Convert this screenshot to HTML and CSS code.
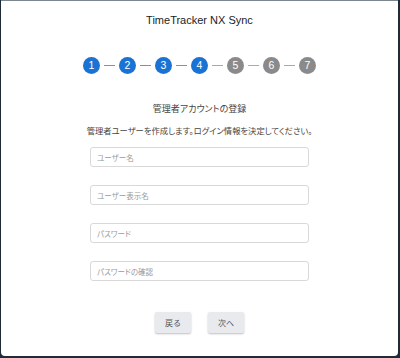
FILE: index.html
```html
<!DOCTYPE html>
<html lang="ja">
<head>
<meta charset="utf-8">
<title>TimeTracker NX Sync</title>
<link rel="stylesheet" href="styles.css">
</head>
<body>
<div class="card">
  <h1 class="title">TimeTracker NX Sync</h1>
  <div class="stepper">
    <span class="step done">1</span><span class="line done"></span>
    <span class="step done">2</span><span class="line done"></span>
    <span class="step done">3</span><span class="line done"></span>
    <span class="step done">4</span><span class="line"></span>
    <span class="step">5</span><span class="line"></span>
    <span class="step">6</span><span class="line"></span>
    <span class="step">7</span>
  </div>
  <h2 class="heading">管理者アカウントの登録</h2>
  <p class="desc">管理者ユーザーを作成します。ログイン情報を決定してください。</p>
  <div class="form">
    <input class="field" type="text" placeholder="ユーザー名">
    <input class="field" type="text" placeholder="ユーザー表示名">
    <input class="field" type="password" placeholder="パスワード">
    <input class="field" type="password" placeholder="パスワードの確認">
  </div>
  <div class="actions">
    <button class="btn">戻る</button>
    <button class="btn">次へ</button>
  </div>
</div>
</body>
</html>
```
FILE: styles.css
```css
html, body {
  margin: 0;
  padding: 0;
}
body {
  background: #1f2b37;
  width: 400px;
  height: 358px;
  overflow: hidden;
  font-family: "Liberation Sans", Roboto, "Noto Sans CJK JP", sans-serif;
}
.card {
  box-sizing: border-box;
  margin: 0 2px 0 1px;
  height: 356px;
  background: #fff;
  border-top: 1px solid #7c868f;
  border-radius: 0 0 4px 4px;
  display: flex;
  flex-direction: column;
  align-items: center;
}
.title {
  margin: 12px 0 0;
  font-size: 11px;
  line-height: 14px;
  font-weight: normal;
  color: #222;
}
.stepper {
  margin-top: 30px;
  display: flex;
  align-items: center;
  gap: 4px;
}
.step {
  width: 17px;
  height: 17px;
  border-radius: 50%;
  background: #8a8a8a;
  color: #fff;
  font-size: 10.5px;
  line-height: 17px;
  text-align: center;
}
.step.done {
  background: #1a73d4;
}
.line {
  width: 11px;
  height: 1.5px;
  background: #aaaaaa;
}
.line.done {
  background: #5a9be0;
}
.heading {
  margin: 29px 0 0;
  font-family: "Noto Sans CJK JP", sans-serif;
  font-feature-settings: "palt";
  font-size: 9px;
  line-height: 12px;
  font-weight: normal;
  color: #444;
}
.desc {
  margin: 9px 0 0;
  font-family: "Noto Sans CJK JP", sans-serif;
  font-feature-settings: "palt";
  font-size: 8.3px;
  line-height: 12px;
  color: #444;
}
.form {
  margin-top: 11px;
  display: flex;
  flex-direction: column;
  gap: 18px;
}
.field {
  box-sizing: border-box;
  width: 219px;
  height: 20px;
  margin: 0;
  padding: 0 6px;
  border: 1px solid #d9d9d9;
  border-radius: 3px;
  background: #fff;
  font-family: "Noto Sans CJK JP", sans-serif;
  font-feature-settings: "palt";
  font-size: 7.5px;
  outline: none;
}
.field::placeholder {
  color: #9a9a9a;
}
.actions {
  margin-top: 31px;
  display: flex;
  gap: 17px;
}
.btn {
  width: 36px;
  height: 21px;
  padding: 0;
  border: none;
  border-radius: 2px;
  background: #e8eaed;
  box-shadow: 0 1px 2px rgba(0, 0, 0, 0.25);
  font-family: "Noto Sans CJK JP", sans-serif;
  font-size: 8px;
  color: #555;
}
```
